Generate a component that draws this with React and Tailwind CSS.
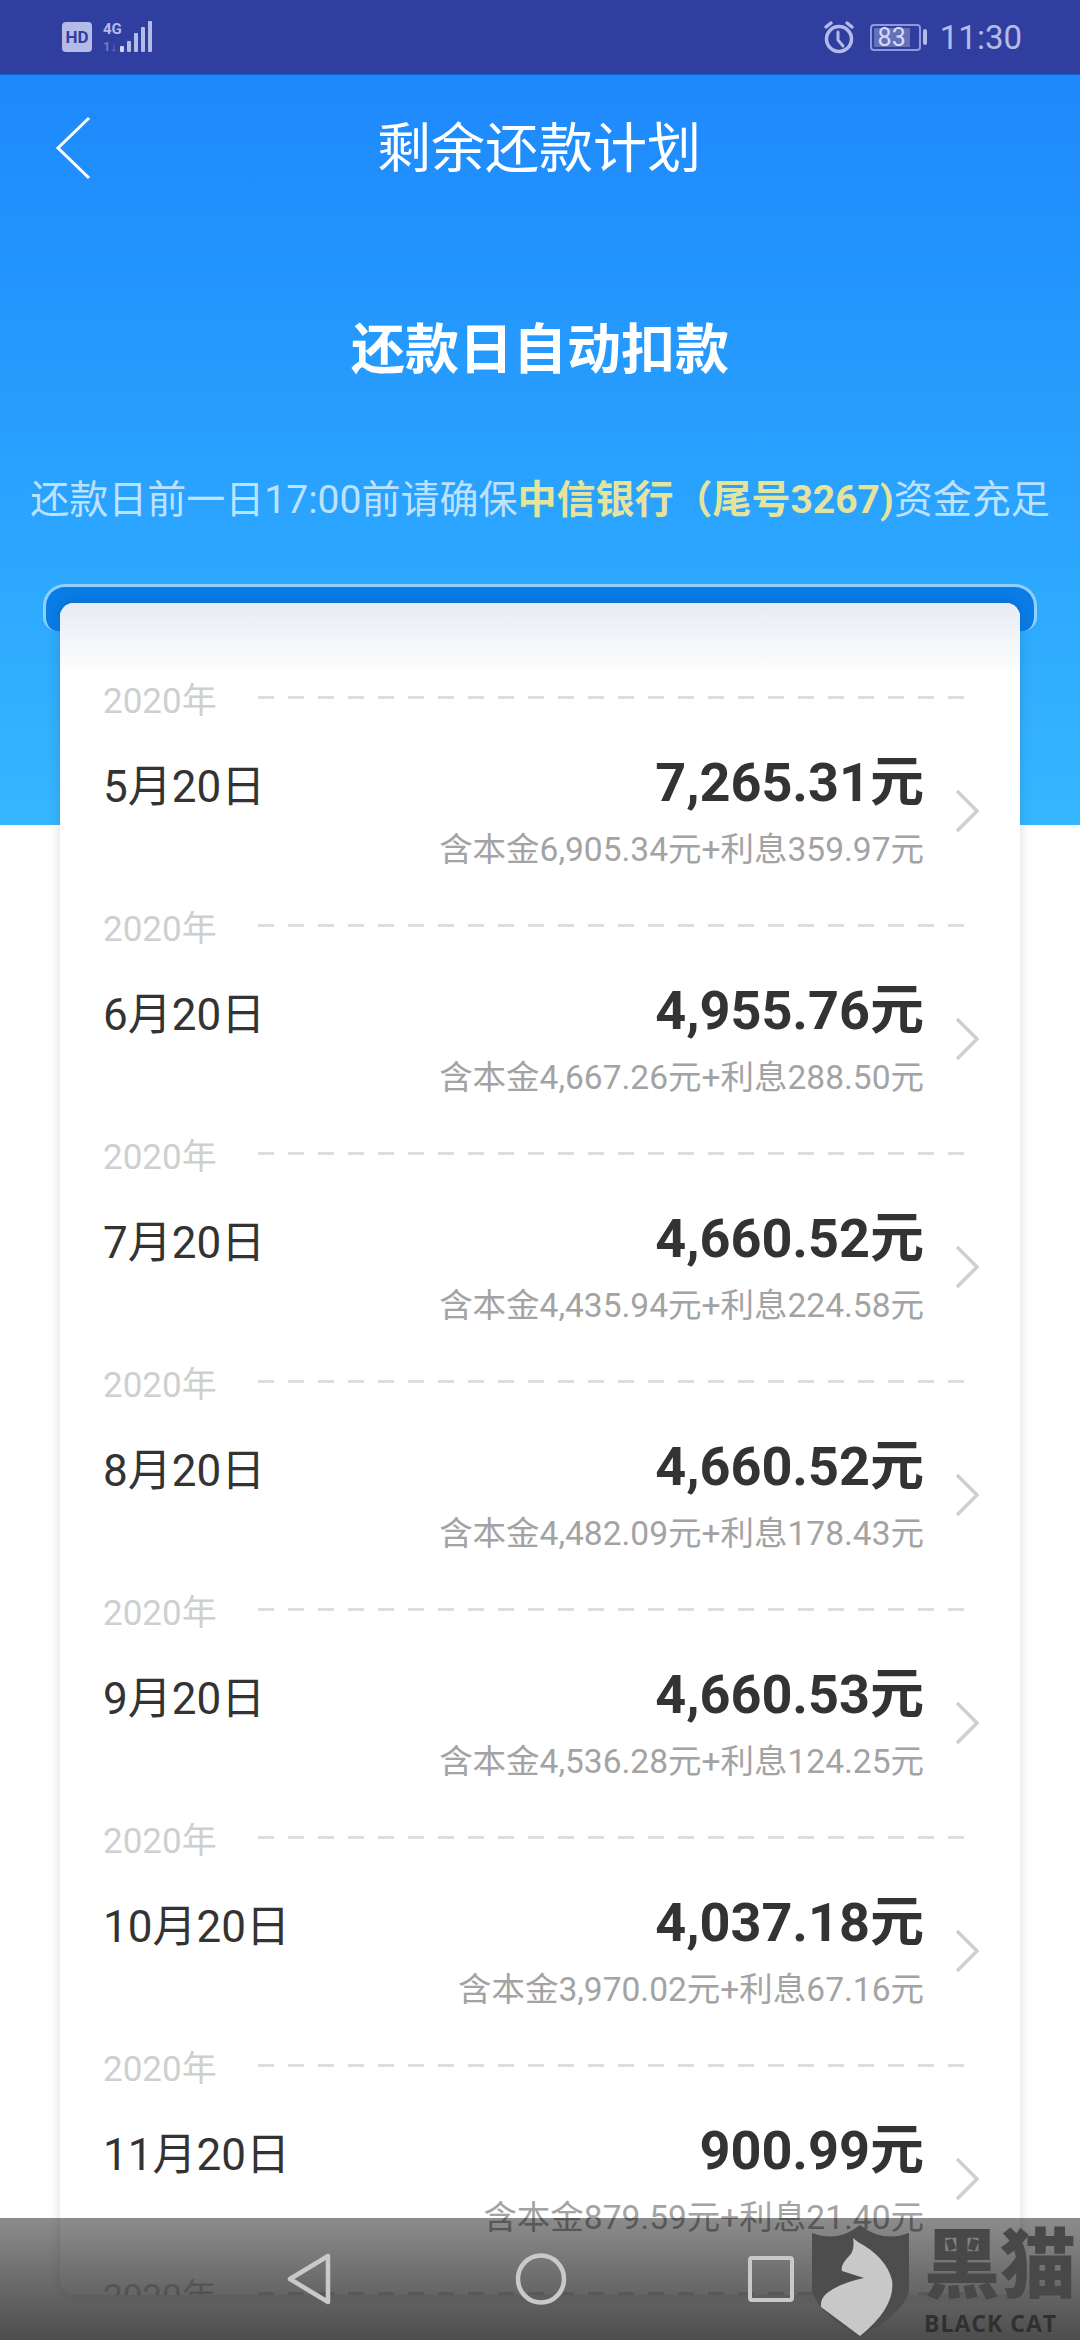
import React from "react";

const plans = [
  { date: "5月20日", amount: "7,265.31元", detail: "含本金6,905.34元+利息359.97元" },
  { date: "6月20日", amount: "4,955.76元", detail: "含本金4,667.26元+利息288.50元" },
  { date: "7月20日", amount: "4,660.52元", detail: "含本金4,435.94元+利息224.58元" },
  { date: "8月20日", amount: "4,660.52元", detail: "含本金4,482.09元+利息178.43元" },
  { date: "9月20日", amount: "4,660.53元", detail: "含本金4,536.28元+利息124.25元" },
  { date: "10月20日", amount: "4,037.18元", detail: "含本金3,970.02元+利息67.16元" },
  { date: "11月20日", amount: "900.99元", detail: "含本金879.59元+利息21.40元" },
];

const YearLine = () => (
  <div className="h-[46px] flex items-start pr-[13px]">
    <span className="w-[155px] text-[35px] leading-[50px] text-[#cfcfcf]">2020年</span>
    <div className="mt-[19px] h-[3px] flex-1 bg-[repeating-linear-gradient(90deg,#dedede_0,#dedede_16px,transparent_16px,transparent_30px)]" />
  </div>
);

const StatusBar = () => (
  <div className="h-[74px] bg-[#303f9f] flex items-center justify-between pl-[62px] pr-[58px] text-[#b4bbe8]">
    <svg width="92" height="34" viewBox="0 0 92 34" fill="none">
      <rect x="0" y="2" width="30" height="30" rx="4" fill="#b4bbe8" />
      <text x="15" y="23" textAnchor="middle" fontSize="17" fontWeight="700" fontFamily="Roboto, sans-serif" fill="#303f9f">HD</text>
      <text x="41" y="14" fontSize="15" fontWeight="700" fontFamily="Roboto, sans-serif" fill="#b4bbe8">4G</text>
      <text x="41" y="31" fontSize="13" fontWeight="700" fontFamily="Roboto, sans-serif" fill="#6f7bc2">1↓</text>
      <rect x="58" y="26" width="4" height="6" rx="1" fill="#d0d5f2" />
      <rect x="65" y="21" width="4" height="11" rx="1" fill="#b4bbe8" />
      <rect x="72" y="13" width="4" height="19" rx="1" fill="#b4bbe8" />
      <rect x="79" y="7" width="4" height="25" rx="1" fill="#b4bbe8" />
      <rect x="86" y="1" width="4" height="31" rx="1" fill="#b4bbe8" />
    </svg>
    <div className="flex items-center">
      <svg width="32" height="34" viewBox="0 0 32 34" fill="none" stroke="#b4bbe8" strokeWidth="3.5" strokeLinecap="round">
        <circle cx="16" cy="19" r="12.5" />
        <path d="M15 12v8l5 6" strokeWidth="3" />
        <path d="M3 7l5-4M29 7l-5-4" />
      </svg>
      <div className="ml-[15px] w-[51px] h-[27px] rounded-[4px] border-2 border-[#8f98d8] p-[2px]">
        <div className="h-full w-[83%] bg-[#6470b8] flex items-center justify-center text-[25px] leading-none text-[#d7dbf5] font-['Roboto',sans-serif]">
          83
        </div>
      </div>
      <div className="ml-[2px] w-[4px] h-[16px] rounded-[2px] bg-[#b4bbe8]" />
      <span className="ml-[13px] text-[33px] leading-none font-normal font-['Roboto',sans-serif]">11:30</span>
    </div>
  </div>
);

const PlanRow = ({ plan }) => (
  <div className="h-[228px] pl-[43px] pr-[41px]">
    <YearLine />
    <div className="mt-[25px] flex items-center justify-between">
      <span className="self-start mt-[14px] text-[44px] leading-[50px] text-[#333]">{plan.date}</span>
      <div className="flex items-center gap-[31px]">
        <div className="text-right">
          <div className="text-[54px] leading-[70px] font-bold text-[#333]">{plan.amount}</div>
          <div className="mt-[9px] h-[46px] text-[33.5px] leading-[46px] text-[#a3a3a3]">{plan.detail}</div>
        </div>
        <svg width="24" height="44" viewBox="0 0 24 44" fill="none" stroke="#cfcfcf" strokeWidth="3.5">
          <path d="M2 2l20 20L2 42" />
        </svg>
      </div>
    </div>
  </div>
);

const BottomNav = () => (
  <div className="absolute left-0 right-0 bottom-0 h-[122px] bg-gradient-to-b from-black/45 to-black/70 flex items-start">
    <svg className="ml-[286px] mt-[35px]" width="46" height="52" viewBox="0 0 46 52" fill="none" stroke="#c9c9c9" strokeWidth="4.5" strokeLinejoin="round">
      <path d="M42 3v46L4 26z" />
    </svg>
    <svg className="ml-[182px] mt-[35px]" width="54" height="52" viewBox="0 0 54 52" fill="none" stroke="#c9c9c9" strokeWidth="4.5">
      <ellipse cx="27" cy="26" rx="23" ry="23.5" />
    </svg>
    <div className="ml-[180px] mt-[38px] w-[46px] h-[46px] rounded-[4px] border-[4px] border-[#c9c9c9]" />
  </div>
);

const Watermark = () => (
  <div className="absolute left-[812px] top-[2225px] flex items-start">
    <svg width="97" height="112" viewBox="0 0 97 112">
      <path d="M0 8Q26 18 48 0Q70 18 97 8V66Q92 88 48 112Q6 88 0 66Z" fill="#4d4d4d" />
      <path d="M41 13L46 17Q74 32 80 55Q84 82 48 111L9 82Q8 74 15 68Q28 58 52 53L30 46Q28 40 38 30Q43 24 41 13Z" fill="#c8c8c8" />
    </svg>
    <div className="ml-[15px] mt-[2px] w-[156px]">
      <div className="text-[76px] leading-[78px] font-black whitespace-nowrap text-[#484848]">黑猫</div>
      <div className="mt-[5px] text-[23px] leading-[26px] font-bold tracking-[1px] whitespace-nowrap text-[#303030] font-['Open_Sans',sans-serif]">BLACK CAT</div>
    </div>
  </div>
);

export default function App() {
  return (
    <div className="relative w-[1080px] h-[2340px] overflow-hidden bg-white font-['Roboto','Noto_Sans_CJK_SC',sans-serif]">
      <StatusBar />
      <div className="h-[751px] border-t border-[#1565d8] bg-gradient-to-b from-[#1e88fc] to-[#36b7ff] flex flex-col">
        <div className="relative h-[150px] flex items-center justify-center">
          <svg className="absolute left-[55px] top-[41px]" width="36" height="64" viewBox="0 0 36 64" fill="none" stroke="#fff" strokeWidth="3">
            <path d="M34 2L3 32l31 30" />
          </svg>
          <h1 className="text-[54px] leading-none font-normal text-white ml-[-2px]">剩余还款计划</h1>
        </div>
        <h2 className="mt-[93px] text-center text-[54px] leading-[66px] font-bold text-white">还款日自动扣款</h2>
        <p className="mt-[91px] text-center text-[39px] leading-[50px] whitespace-nowrap text-white/70">
          还款日前一日17:00前请确保<span className="font-bold text-[#e6e49c]">中信银行（尾号3267)</span>资金充足
        </p>
        <div className="mt-[59px] mx-[43px] h-[47px] rounded-t-[22px] rounded-b-[14px] border-[3px] border-b-0 border-[#8fd0ff] bg-[#0a7ce6]" />
      </div>
      <div className="relative -mt-[222px] mx-[60px] h-[1692px] overflow-hidden rounded-[14px] bg-white shadow-[0_0_14px_rgba(0,0,0,0.14)]">
        <div className="h-[74px] bg-gradient-to-b from-[#e8ebf4] to-white" />
        {plans.map((plan) => (
          <PlanRow key={plan.date} plan={plan} />
        ))}
        <div className="pl-[43px] pr-[41px]">
          <YearLine />
        </div>
      </div>
      <BottomNav />
      <Watermark />
    </div>
  );
}
